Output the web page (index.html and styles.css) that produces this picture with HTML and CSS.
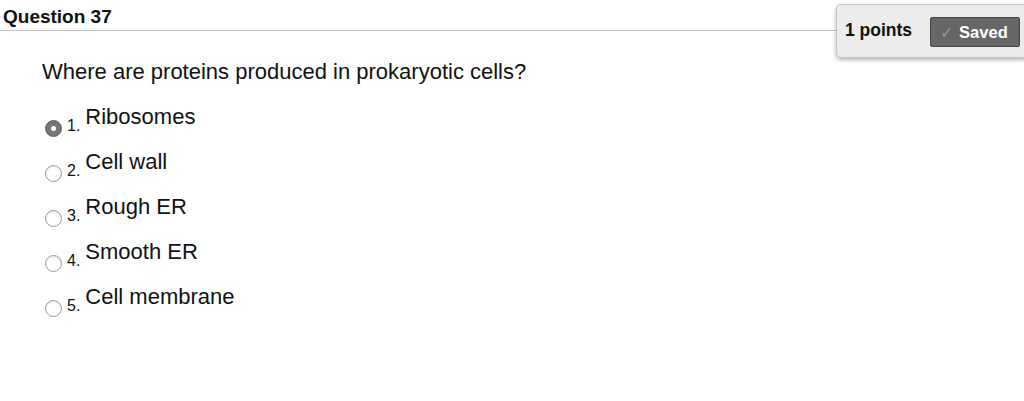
FILE: index.html
```html
<!DOCTYPE html>
<html lang="en">
<head>
  <meta charset="UTF-8">
  <title>Question 37</title>
  <link rel="stylesheet" href="styles.css">
</head>
<body>
  <div class="question-head">
    <h2 class="question-title">Question 37</h2>
    <div class="points-box">
      <span class="points">1 points</span>
      <span class="saved"><span class="check">&#10003;</span>Saved</span>
    </div>
  </div>

  <p class="question-text">Where are proteins produced in prokaryotic cells?</p>

  <ul class="options">
    <li class="option">
      <span class="radio checked"></span>
      <span class="num">1.</span>
      <span class="label">Ribosomes</span>
    </li>
    <li class="option">
      <span class="radio"></span>
      <span class="num">2.</span>
      <span class="label">Cell wall</span>
    </li>
    <li class="option">
      <span class="radio"></span>
      <span class="num">3.</span>
      <span class="label">Rough ER</span>
    </li>
    <li class="option">
      <span class="radio"></span>
      <span class="num">4.</span>
      <span class="label">Smooth ER</span>
    </li>
    <li class="option">
      <span class="radio"></span>
      <span class="num">5.</span>
      <span class="label">Cell membrane</span>
    </li>
  </ul>
</body>
</html>
```

FILE: styles.css
```css
body {
  margin: 0;
  font-family: "Liberation Sans", Arial, sans-serif;
  color: #111;
  background: #fff;
}

.question-head {
  position: relative;
}

.question-title {
  margin: 0 188px 0 0;
  padding: 6px 0 2px 3px;
  line-height: 22px;
  font-size: 19px;
  font-weight: bold;
  border-bottom: 1px solid #c2c2c2;
}

.points-box {
  position: absolute;
  top: 4px;
  left: 836px;
  right: -6px;
  height: 54px;
  box-sizing: border-box;
  background: #ececec;
  border: 1px solid #c4c4c4;
  border-radius: 5px;
  box-shadow: 0 2px 4px rgba(0, 0, 0, 0.3);
  display: flex;
  align-items: center;
  padding: 0 0 0 8px;
  gap: 18px;
}

.points {
  font-size: 17.5px;
  font-weight: bold;
  color: #111;
  margin-top: -2px;
}

.saved {
  box-sizing: border-box;
  width: 90px;
  height: 30px;
  line-height: 28px;
  background: #666;
  color: #fff;
  font-weight: bold;
  font-size: 16.5px;
  border: 1px solid #444;
  border-radius: 2px;
  padding: 0 0 0 9px;
  margin-top: 1px;
}

.check {
  color: #9c9c9c;
  font-weight: normal;
  font-size: 16px;
  margin-right: 6px;
}

.question-text {
  margin: 28px 0 0 42px;
  font-size: 22px;
}

.options {
  list-style: none;
  margin: 19px 0 0 0;
  padding: 0 0 0 45px;
}

.option {
  display: flex;
  align-items: flex-start;
  height: 45px;
}

.radio {
  width: 17px;
  height: 17px;
  border: 1px solid #9c9c9c;
  border-radius: 50%;
  margin-top: 16px;
  background: #fff;
  box-sizing: border-box;
  box-shadow: inset 0 1px 2px rgba(0, 0, 0, 0.12);
}

.radio.checked {
  background: #777;
  border-color: #666;
  position: relative;
}

.radio.checked::after {
  content: "";
  position: absolute;
  left: 5px;
  top: 5px;
  width: 5px;
  height: 5px;
  border-radius: 50%;
  background: #fff;
}

.num {
  font-size: 16px;
  margin: 13px 0 0 5px;
}

.label {
  font-size: 22px;
  margin: 0 0 0 5px;
}
```
